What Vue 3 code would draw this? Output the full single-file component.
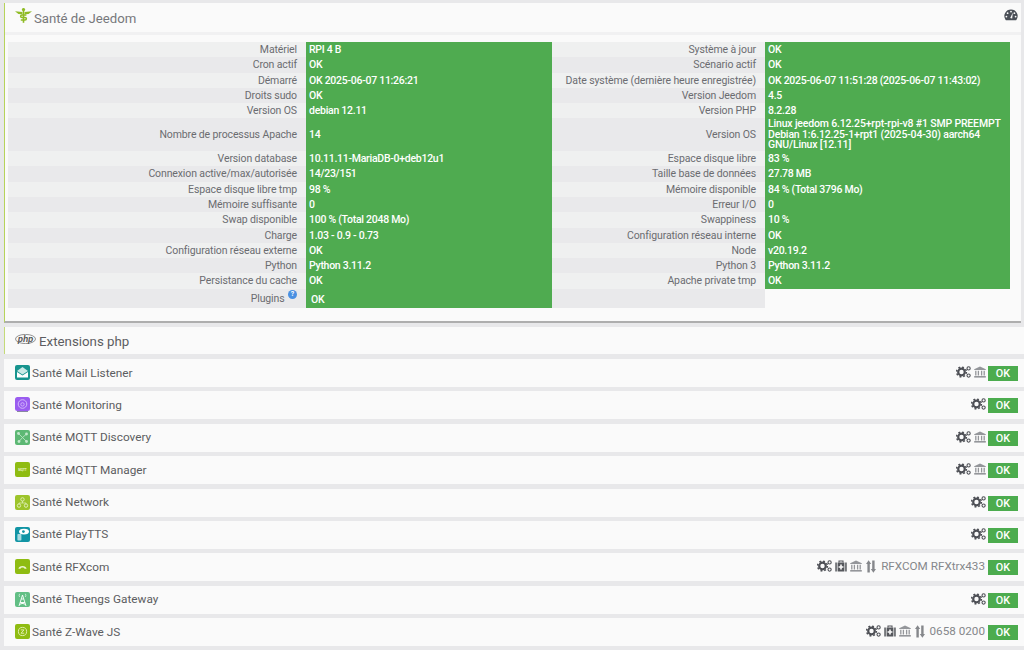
<script setup>
const rows = [
  ['Matériel', 'RPI 4 B', 'Système à jour', 'OK'],
  ['Cron actif', 'OK', 'Scénario actif', 'OK'],
  ['Démarré', 'OK 2025-06-07 11:26:21', 'Date système (dernière heure enregistrée)', 'OK 2025-06-07 11:51:28 (2025-06-07 11:43:02)'],
  ['Droits sudo', 'OK', 'Version Jeedom', '4.5'],
  ['Version OS', 'debian 12.11', 'Version PHP', '8.2.28'],
  ['Nombre de processus Apache', '14', 'Version OS', 'Linux jeedom 6.12.25+rpt-rpi-v8 #1 SMP PREEMPT Debian 1:6.12.25-1+rpt1 (2025-04-30) aarch64 GNU/Linux [12.11]', true],
  ['Version database', '10.11.11-MariaDB-0+deb12u1', 'Espace disque libre', '83 %'],
  ['Connexion active/max/autorisée', '14/23/151', 'Taille base de données', '27.78 MB'],
  ['Espace disque libre tmp', '98 %', 'Mémoire disponible', '84 % (Total 3796 Mo)'],
  ['Mémoire suffisante', '0', 'Erreur I/O', '0'],
  ['Swap disponible', '100 % (Total 2048 Mo)', 'Swappiness', '10 %'],
  ['Charge', '1.03 - 0.9 - 0.73', 'Configuration réseau interne', 'OK'],
  ['Configuration réseau externe', 'OK', 'Node', 'v20.19.2'],
  ['Python', 'Python 3.11.2', 'Python 3', 'Python 3.11.2'],
  ['Persistance du cache', 'OK', 'Apache private tmp', 'OK'],
]
const plugins = [
  { name: 'Santé Mail Listener', icon: 'mail', tools: ['cogs', 'bank'] },
  { name: 'Santé Monitoring', icon: 'monitoring', tools: ['cogs'] },
  { name: 'Santé MQTT Discovery', icon: 'discovery', tools: ['cogs', 'bank'] },
  { name: 'Santé MQTT Manager', icon: 'manager', tools: ['cogs', 'bank'] },
  { name: 'Santé Network', icon: 'network', tools: ['cogs'] },
  { name: 'Santé PlayTTS', icon: 'tts', tools: ['cogs'] },
  { name: 'Santé RFXcom', icon: 'rfx', tools: ['cogs', 'medkit', 'bank', 'arrows'], port: 'RFXCOM RFXtrx433' },
  { name: 'Santé Theengs Gateway', icon: 'theengs', tools: ['cogs'] },
  { name: 'Santé Z-Wave JS', icon: 'zwave', tools: ['cogs', 'medkit', 'bank', 'arrows'], port: '0658 0200' },
]
</script>

<template>
  <div class="page">
    <section class="panel">
      <header class="panel-head">
        <h3 class="title">
          <svg class="health" viewBox="0 0 17 15" width="17" height="15">
            <path d="M0 3.2 L7.4 4 L7.4 6.2 L3.4 6 Z M17 3.2 L9.6 4 L9.6 6.2 L13.6 6 Z" fill="#8fbb25" />
            <rect x="7.7" y="0.4" width="1.6" height="14.4" fill="#8fbb25" />
            <circle cx="8.5" cy="1.6" r="1.6" fill="#8fbb25" />
            <path d="M11.4 7 H7 Q5.6 7 5.6 8.3 Q5.6 9.5 7 9.5 H10 Q11.4 9.5 11.4 10.8 Q11.4 12 10 12 H5.8" fill="none" stroke="#8fbb25" stroke-width="1.5" />
          </svg>
          Santé de Jeedom
        </h3>
        <svg class="gauge" viewBox="0 0 14 12" width="14" height="12">
          <path d="M7 0.4 A6.6 6.6 0 0 0 1.5 10.7 Q1.8 11.3 2.5 11.3 H11.5 Q12.2 11.3 12.5 10.7 A6.6 6.6 0 0 0 7 0.4 Z" fill="#4a4f57" />
          <circle cx="7" cy="2.6" r="0.9" fill="#fafafa" />
          <circle cx="3.6" cy="4.2" r="0.9" fill="#fafafa" />
          <circle cx="2.4" cy="7.6" r="0.9" fill="#fafafa" />
          <circle cx="11.6" cy="7.6" r="0.9" fill="#fafafa" />
          <circle cx="10.4" cy="4.2" r="0.9" fill="#fafafa" />
          <path d="M6.2 9 L8.8 3.6 L8.2 9.4 Z" fill="#fafafa" />
        </svg>
      </header>
      <div class="panel-body">
        <table class="health-table">
          <colgroup>
            <col class="c1" /><col class="c2" /><col class="c3" /><col class="c4" />
          </colgroup>
          <tbody>
            <tr v-for="(r, i) in rows" :key="i" :class="{ tall: r[4] }">
              <td class="lbl">{{ r[0] }}</td>
              <td class="val">{{ r[1] }}</td>
              <td class="lbl">{{ r[2] }}</td>
              <td class="val" :class="{ multi: r[4] }">{{ r[3] }}</td>
            </tr>
            <tr class="last">
              <td class="lbl">
                Plugins
                <sup class="help">?</sup>
              </td>
              <td class="val plug">OK</td>
              <td class="lbl"></td>
              <td class="empty"></td>
            </tr>
          </tbody>
        </table>
      </div>
    </section>

    <section class="ext">
      <svg class="php" viewBox="0 0 21 10" width="21" height="10">
        <ellipse cx="10.5" cy="5" rx="10" ry="4.6" fill="none" stroke="#666" stroke-width="0.7" />
        <text x="10.5" y="7.6" text-anchor="middle" class="php-text">php</text>
      </svg>
      <span>Extensions php</span>
    </section>

    <div v-for="p in plugins" :key="p.name" class="plugin">
      <div class="plugin-name">
        <svg class="p-icon" viewBox="0 0 15 15" width="15" height="15">
          <template v-if="p.icon === 'mail'">
            <rect width="15" height="15" rx="2" fill="#17948e" />
            <path d="M2 6 L7.5 2 L13 6 L7.5 9.5 Z" fill="#c9e9e6" />
            <path d="M2 7 L7.5 10.5 L13 7 V12.5 H2 Z" fill="#fff" />
          </template>
          <template v-else-if="p.icon === 'monitoring'">
            <rect width="15" height="14" rx="2.5" fill="#9a5cf0" />
            <rect x="2" y="14.2" width="11" height="0.8" fill="#6d6d8a" />
            <circle cx="7.5" cy="7" r="4.3" fill="none" stroke="#d9c2fb" stroke-width="0.9" />
            <circle cx="7.5" cy="7.4" r="1.7" fill="none" stroke="#d9c2fb" stroke-width="0.8" />
          </template>
          <template v-else-if="p.icon === 'discovery'">
            <rect width="15" height="15" rx="2" fill="#5db874" />
            <path d="M3.5 3.5 L7.5 7.5 L11.5 4 M7.5 7.5 L4 11.5 M7.5 7.5 L11.5 11.5" stroke="#c4e8cd" stroke-width="0.8" fill="none" />
            <circle cx="3.5" cy="3.5" r="1.4" fill="#c4e8cd" />
            <circle cx="11.5" cy="4" r="1.4" fill="#c4e8cd" />
            <circle cx="4" cy="11.5" r="1.4" fill="#c4e8cd" />
            <circle cx="11.5" cy="11.5" r="1.4" fill="#c4e8cd" />
          </template>
          <template v-else-if="p.icon === 'manager'">
            <rect width="15" height="15" rx="2" fill="#8fbc12" />
            <text x="7.5" y="8.6" text-anchor="middle" class="tiny">MQTT</text>
          </template>
          <template v-else-if="p.icon === 'network'">
            <rect width="15" height="15" rx="2" fill="#9dc42b" />
            <circle cx="7.5" cy="4.4" r="1.7" fill="none" stroke="#e3f0bd" stroke-width="0.9" />
            <circle cx="4" cy="10.6" r="1.7" fill="none" stroke="#e3f0bd" stroke-width="0.9" />
            <circle cx="11" cy="10.6" r="1.7" fill="none" stroke="#e3f0bd" stroke-width="0.9" />
            <path d="M7.5 6 V8 M4 9 V8 H11 V9" stroke="#e3f0bd" stroke-width="0.7" fill="none" />
          </template>
          <template v-else-if="p.icon === 'tts'">
            <rect width="15" height="15" rx="2" fill="#1295a5" />
            <ellipse cx="9" cy="4.6" rx="5" ry="2.9" fill="#fff" />
            <circle cx="8.4" cy="4.6" r="1.4" fill="#1295a5" />
            <rect x="2.4" y="7" width="4" height="6.4" rx="0.7" fill="#a9dbe1" />
          </template>
          <template v-else-if="p.icon === 'rfx'">
            <rect width="15" height="15" rx="2" fill="#8fbc12" />
            <path d="M3.4 9.8 A4.2 3.6 0 0 1 11.6 9.8 H9.6 A2.2 2 0 0 0 5.4 9.8 Z" fill="#eef5d2" />
          </template>
          <template v-else-if="p.icon === 'theengs'">
            <rect width="15" height="15" rx="2" fill="#62bf85" />
            <path d="M7.5 3 L4 14 M7.5 3 L11 14 M5.2 10.5 H9.8 M6.2 7 H8.8 M4.6 12.4 L9.8 10.5 M10.4 12.4 L5.2 10.5" stroke="#fff" stroke-width="0.9" fill="none" />
            <path d="M4.6 1.8 Q3.6 3.4 4.6 5 M10.4 1.8 Q11.4 3.4 10.4 5" stroke="#eaf8ef" stroke-width="0.7" fill="none" />
          </template>
          <template v-else>
            <rect width="15" height="15" rx="2" fill="#8fbc12" />
            <circle cx="7.5" cy="7.5" r="4.1" fill="none" stroke="#e5f1bb" stroke-width="0.9" />
            <path d="M5.8 5.9 H9 L6 9.2 H9.2" stroke="#e5f1bb" stroke-width="0.9" fill="none" />
          </template>
        </svg>
        <span>{{ p.name }}</span>
      </div>
      <div class="plugin-right">
        <template v-for="t in p.tools" :key="t">
          <svg v-if="t === 'cogs'" class="t-cogs" viewBox="0 0 15 12" width="15" height="12">
            <circle cx="5.5" cy="6" r="3.3" fill="none" stroke="#4d4f55" stroke-width="2.2" />
            <circle cx="5.5" cy="6" r="4.9" fill="none" stroke="#4d4f55" stroke-width="1.5" stroke-dasharray="1.9 1.95" />
            <circle cx="12.6" cy="2.4" r="1.6" fill="none" stroke="#4d4f55" stroke-width="1.1" />
            <circle cx="12.6" cy="9.6" r="1.6" fill="none" stroke="#4d4f55" stroke-width="1.1" />
          </svg>
          <svg v-else-if="t === 'medkit'" class="t-med" viewBox="0 0 12 12" width="12" height="12">
            <path d="M4 2.5 V1 H8 V2.5" fill="none" stroke="#55575c" stroke-width="1.1" />
            <rect x="0.3" y="2.5" width="1.5" height="9" fill="#55575c" />
            <rect x="10.2" y="2.5" width="1.5" height="9" fill="#55575c" />
            <rect x="2.6" y="2.5" width="6.8" height="9" fill="#55575c" />
            <path d="M6 4.6 V9.4 M3.6 7 H8.4" stroke="#fafafa" stroke-width="1.6" />
          </svg>
          <svg v-else-if="t === 'bank'" class="t-bank" viewBox="0 0 12 12" width="12" height="12">
            <path d="M6 0.6 L11.8 3.2 V3.9 H0.2 V3.2 Z" fill="#94969a" />
            <path d="M1.8 4.8 V9.4 M4.4 4.8 V9.4 M7.6 4.8 V9.4 M10.2 4.8 V9.4" stroke="#94969a" stroke-width="1.3" />
            <rect x="0.2" y="10" width="11.6" height="1.6" fill="#94969a" />
          </svg>
          <svg v-else class="t-arrows" viewBox="0 0 10 13" width="10" height="13">
            <path d="M2.6 0.2 L5.2 4 H3.8 V12.6 H1.4 V4 H0 Z M7.4 12.8 L4.8 9 H6.2 V0.4 H8.6 V9 H10 Z" fill="#85878b" />
          </svg>
        </template>
        <span v-if="p.port" class="port">{{ p.port }}</span>
        <span class="ok">OK</span>
      </div>
    </div>
  </div>
</template>

<style scoped>
.page {
  height: 650px;
  overflow: hidden;
  padding-top: 3px;
  box-sizing: border-box;
  background: #e8e8ea;
  font-family: Roboto, "Liberation Sans", sans-serif;
}
.panel {
  margin: 0 3px 0 4px;
  height: 320px;
  box-sizing: border-box;
  background: #fafafa;
  border-left: 1px solid #b6d35a;
  border-bottom: 2px solid #aeaeae;
}
.panel-head {
  height: 29px;
  border-bottom: 3px solid #f1f1f2;
  display: flex;
  align-items: center;
  justify-content: space-between;
  padding: 0 3px 0 10px;
}
.title {
  margin: 0;
  padding-top: 2px;
  display: flex;
  align-items: center;
  gap: 2px;
  font-size: 13.2px;
  font-weight: 400;
  color: #77787c;
}
.health { margin-top: -6px; }
.gauge { margin-top: -5px; }
.panel-body { padding: 7px 10px 0 3px; }
.health-table {
  width: 1002px;
  table-layout: fixed;
  border-collapse: collapse;
  font-size: 10.5px;
}
.c1 { width: 298px; }
.c2 { width: 246px; }
.c3 { width: 213px; }
.c4 { width: 245px; }
td {
  padding: 0;
  height: 15.3px;
  line-height: 15.3px;
  vertical-align: middle;
}
tr:nth-child(odd) .lbl { background: #eff0f0; }
tr:nth-child(even) .lbl { background: #e9e9eb; }
.lbl {
  text-align: right;
  padding-right: 9px;
  color: #6b6c70;
  letter-spacing: -0.12px;
}
.val {
  background: #4fab50;
  color: #fff;
  padding-left: 3px;
  font-weight: 500;
  white-space: nowrap;
  letter-spacing: -0.27px;
}
.val.multi {
  white-space: normal;
  line-height: 10.2px;
  padding-right: 3px;
  letter-spacing: -0.17px;
}
.tall td { height: 32.6px; }
.last td { height: 19.4px; }
.plug { padding-left: 5px; padding-top: 2px; box-sizing: border-box; }
.empty { background: transparent; }
.help {
  display: inline-block;
  width: 9px;
  height: 9px;
  line-height: 9px;
  border-radius: 50%;
  background: #4a90e2;
  color: #fff;
  font-size: 7px;
  font-weight: 700;
  text-align: center;
  vertical-align: 6px;
  margin-left: 1px;
  letter-spacing: 0;
}
.ext {
  margin: 4px 0 0 4px;
  height: 27px;
  box-sizing: border-box;
  background: #fafafa;
  border-left: 1px solid #c4da78;
  display: flex;
  align-items: center;
  padding-left: 10px;
  padding-top: 2px;
  gap: 3px;
  font-size: 13.3px;
  color: #5c5d61;
}
.php { margin-top: -5px; }
.php-text {
  font-family: "Liberation Sans", sans-serif;
  font-size: 8.5px;
  font-style: italic;
  font-weight: 700;
  fill: #555;
}
.plugin {
  margin: 4.4px 0 0 4px;
  height: 28px;
  background: #fafafa;
  display: flex;
  align-items: center;
  justify-content: space-between;
  padding: 0 6px 0 11px;
}
.plugin:first-of-type { margin-top: 5px; }
.plugin-name {
  display: flex;
  align-items: center;
  gap: 2px;
  font-size: 11.8px;
  color: #5c5d61;
  margin-top: -1px;
}
.plugin-right {
  display: flex;
  align-items: center;
  gap: 3px;
}
.t-cogs, .t-med, .t-bank, .t-arrows { margin-top: -2px; }
.t-arrows { margin-left: 1px; }
.port {
  font-size: 11.7px;
  color: #85878b;
  margin-left: 2px;
  margin-right: 1px;
  margin-top: -2px;
}
.ok {
  width: 30px;
  height: 15px;
  line-height: 15px;
  background: #4cac4e;
  color: #fff;
  font-size: 10.8px;
  font-weight: 500;
  text-align: center;
  margin-left: -1px;
  margin-top: 1px;
}
.tiny {
  font-family: Roboto, sans-serif;
  font-size: 3px;
  font-weight: 700;
  fill: #eef5d2;
}
</style>

<style>
html, body { margin: 0; background: #e8e8ea; }
</style>
